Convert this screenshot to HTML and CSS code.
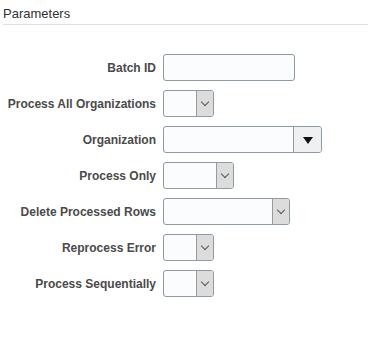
FILE: index.html
```html
<!doctype html>
<html lang="en">
	<head>
		<meta charset="utf-8">
		<title>Parameters</title>
		<link rel="stylesheet" href="styles.css">
	</head>
	<body>
		<div class="section">
			<h2 class="section-title">Parameters</h2>
			<div class="params">
				<label class="param-label">Batch ID</label>
				<div class="field"><div class="text-box w-132"></div></div>

				<label class="param-label">Process All Organizations</label>
				<div class="field">
					<div class="select w-51"><span class="select-btn"><i class="chev"></i></span></div>
				</div>

				<label class="param-label">Organization</label>
				<div class="field">
					<div class="lov w-159"><span class="lov-btn"><i class="tri"></i></span></div>
				</div>

				<label class="param-label">Process Only</label>
				<div class="field">
					<div class="select w-71"><span class="select-btn"><i class="chev"></i></span></div>
				</div>

				<label class="param-label">Delete Processed Rows</label>
				<div class="field">
					<div class="select w-127"><span class="select-btn"><i class="chev"></i></span></div>
				</div>

				<label class="param-label">Reprocess Error</label>
				<div class="field">
					<div class="select w-51"><span class="select-btn"><i class="chev"></i></span></div>
				</div>

				<label class="param-label">Process Sequentially</label>
				<div class="field">
					<div class="select w-51"><span class="select-btn"><i class="chev"></i></span></div>
				</div>
			</div>
		</div>
	</body>
</html>
```

FILE: styles.css
```css
html,
body,
div,
h2 {
	margin: 0;
	padding: 0;
}
body {
	font-family: "Liberation Sans", Arial, sans-serif;
	background: #fff;
}
.section-title {
	margin: 0 1px 0 3px;
	padding: 6px 0 2px;
	height: 16px;
	line-height: 16px;
	font-size: 13px;
	font-weight: normal;
	color: #333;
	border-bottom: 1px solid #d9e0e6;
}
.params {
	display: grid;
	grid-template-columns: 156px auto;
	column-gap: 7px;
	row-gap: 9px;
	margin-top: 29px;
}
.param-label {
	display: flex;
	align-items: center;
	justify-content: flex-end;
	height: 27px;
	font-size: 12px;
	font-weight: bold;
	color: #4a4a4a;
	white-space: nowrap;
}
.field {
	display: flex;
	align-items: center;
}
.text-box,
.select,
.lov {
	display: flex;
	justify-content: flex-end;
	box-sizing: border-box;
	height: 27px;
	border: 1px solid #8c9ba4;
	border-radius: 3px;
	background: #fbfcfd;
	overflow: hidden;
}
.w-51 { width: 51px; }
.w-71 { width: 71px; }
.w-127 { width: 127px; }
.w-132 { width: 132px; }
.w-159 { width: 159px; }
.select-btn {
	display: flex;
	align-items: center;
	justify-content: center;
	box-sizing: border-box;
	width: 17px;
	height: 100%;
	border-left: 1px solid #9a9a9a;
	background: #dcdcdc;
}
.chev {
	display: block;
	width: 5px;
	height: 5px;
	margin-top: -3px;
	border-right: 1px solid #555;
	border-bottom: 1px solid #555;
	transform: rotate(45deg);
}
.lov-btn {
	display: flex;
	align-items: center;
	justify-content: center;
	box-sizing: border-box;
	width: 28px;
	height: 100%;
	border-left: 1px solid #8c9ba4;
	background: #eef0f2;
}
.tri {
	display: block;
	width: 0;
	height: 0;
	margin-top: 1px;
	border-left: 5px solid transparent;
	border-right: 5px solid transparent;
	border-top: 7px solid #111;
}
```
